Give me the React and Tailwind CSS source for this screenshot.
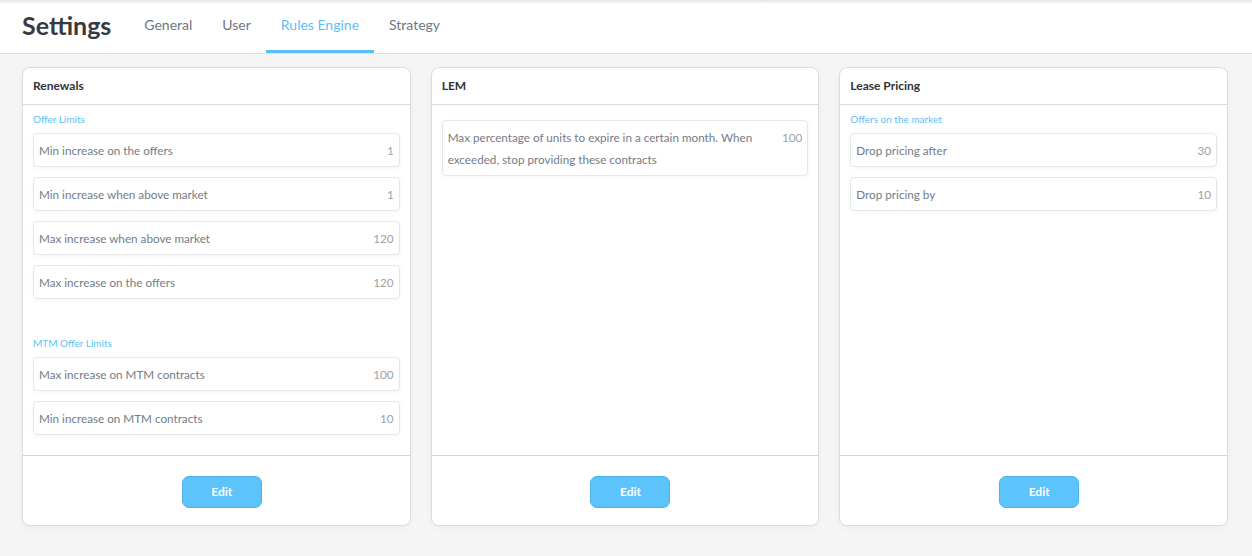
import React from 'react';

const tabs = ['General', 'User', 'Rules Engine', 'Strategy'];

const cards = [
    {
        title: 'Renewals',
        sections: [
            {
                label: 'Offer Limits',
                rows: [
                    ['Min increase on the offers', 1],
                    ['Min increase when above market', 1],
                    ['Max increase when above market', 120],
                    ['Max increase on the offers', 120],
                ],
            },
            {
                label: 'MTM Offer Limits',
                rows: [
                    ['Max increase on MTM contracts', 100],
                    ['Min increase on MTM contracts', 10],
                ],
            },
        ],
    },
    {
        title: 'LEM',
        sections: [
            {
                label: null,
                rows: [['Max percentage of units to expire in a certain month. When exceeded, stop providing these contracts', 100]],
            },
        ],
    },
    {
        title: 'Lease Pricing',
        sections: [
            {
                label: 'Offers on the market',
                rows: [
                    ['Drop pricing after', 30],
                    ['Drop pricing by', 10],
                ],
            },
        ],
    },
];

const Row = ({ text, value }) => (
    <div className="flex items-start justify-between gap-5 rounded-[4px] border border-[#e6e6e6] bg-white px-[5px] py-[5px] text-[11.7px] leading-[22px] shadow-[0_1px_4px_rgba(0,0,0,0.04)]">
        <span className="text-[#737c88]">{text}</span>
        <span className="shrink-0 text-[#9ca1a8]">{value}</span>
    </div>
);

const Card = ({ card }) => (
    <div className="flex h-[459px] flex-col rounded-[8px] border border-[#dcdcdc] bg-white shadow-[0_2px_6px_rgba(0,0,0,0.04)]">
        <div className="flex h-[37px] items-center border-b border-[#dadada] px-[10px] text-[12px] font-bold text-[#2f3338]">
            {card.title}
        </div>
        <div className="flex-1 px-[10px] pt-[8px]">
            {card.sections.map((section, i) => (
                <div key={i} className={i > 0 ? 'mt-[38px]' : ''}>
                    {section.label && (
                        <div className="mb-[8px] text-[10px] leading-[12px] text-[#5bbff7]">{section.label}</div>
                    )}
                    <div className={`flex flex-col gap-[10px] ${section.label ? '' : 'pt-[7px]'}`}>
                        {section.rows.map(([text, value]) => (
                            <Row key={text} text={text} value={value} />
                        ))}
                    </div>
                </div>
            ))}
        </div>
        <div className="flex h-[70px] items-center justify-center border-t border-[#d6d6d6] pl-[11px] pt-[2px]">
            <button className="h-[32px] w-[80px] rounded-[7px] border border-[#4eb2ea] bg-[#5cc3fb] text-[12px] font-bold text-white">
                Edit
            </button>
        </div>
    </div>
);

export default function App() {
    return (
        <div className="min-h-[556px] bg-[#f5f5f5] font-['Lato','Liberation_Sans',sans-serif]">
            {/* top bar */}
            <div className="relative flex h-[54px] items-end border-b border-[#e0e0e0] bg-white pl-[22px]">
                <div className="absolute inset-x-0 top-0 h-[4px] bg-gradient-to-b from-[#e4e4e4] to-white" />
                <h1 className="mb-[13px] mr-[18px] text-[25px] font-bold leading-[30px] text-[#363b43]">Settings</h1>
                <div className="flex h-full items-end">
                    {tabs.map((tab) => {
                        const active = tab === 'Rules Engine';
                        return (
                            <div
                                key={tab}
                                className={`flex h-[53px] items-center border-b-[3px] px-[15px] pb-[2px] text-[14px] ${
                                    active ? 'border-[#5bc0f8] text-[#5bc0f8]' : 'border-transparent text-[#6e7784]'
                                }`}
                            >
                                {tab}
                            </div>
                        );
                    })}
                </div>
            </div>

            <div className="grid grid-cols-3 gap-[20px] pl-[22px] pr-[24px] pt-[13px] pb-[30px]">
                {cards.map((card) => (
                    <Card key={card.title} card={card} />
                ))}
            </div>
        </div>
    );
}
